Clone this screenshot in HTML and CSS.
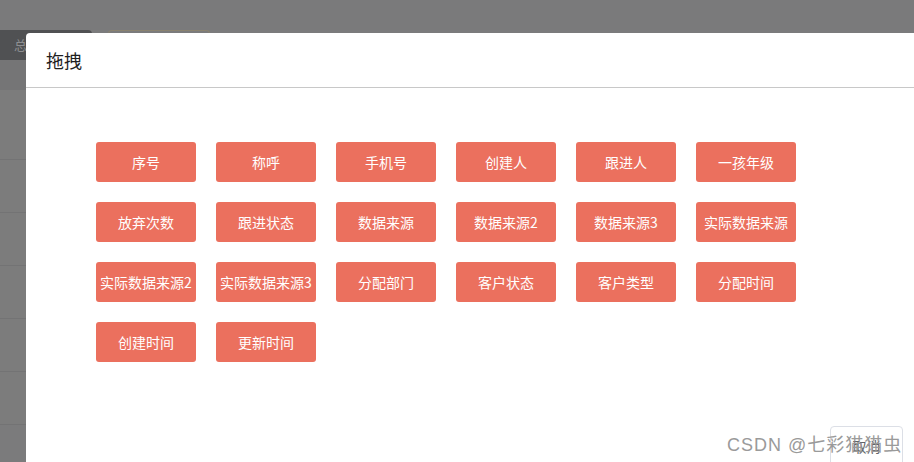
FILE: index.html
```html
<!DOCTYPE html>
<html lang="zh-CN">

<head>
    <meta charset="UTF-8">
    <meta name="viewport" content="width=device-width, initial-scale=1.0">
    <title>拖拽</title>
    <link rel="stylesheet" href="styles.css">
</head>

<body>
    <!-- 背景页面（遮罩下） -->
    <div class="page">
        <div class="top-bar"></div>
        <div class="tab-row">
            <div class="tab-dark">总</div>
            <div class="tab-light"></div>
        </div>
        <div class="band"></div>
        <div class="row row-first"></div>
        <div class="row"></div>
        <div class="row"></div>
        <div class="row"></div>
        <div class="row"></div>
        <div class="row"></div>
    </div>

    <!-- 弹窗 -->
    <div class="dialog">
        <div class="dialog-header">拖拽</div>
        <div class="dialog-body">
            <div class="tag-grid">
                <span class="tag">序号</span>
                <span class="tag">称呼</span>
                <span class="tag">手机号</span>
                <span class="tag">创建人</span>
                <span class="tag">跟进人</span>
                <span class="tag">一孩年级</span>
                <span class="tag">放弃次数</span>
                <span class="tag">跟进状态</span>
                <span class="tag">数据来源</span>
                <span class="tag">数据来源2</span>
                <span class="tag">数据来源3</span>
                <span class="tag">实际数据来源</span>
                <span class="tag">实际数据来源2</span>
                <span class="tag">实际数据来源3</span>
                <span class="tag">分配部门</span>
                <span class="tag">客户状态</span>
                <span class="tag">客户类型</span>
                <span class="tag">分配时间</span>
                <span class="tag">创建时间</span>
                <span class="tag">更新时间</span>
            </div>
        </div>
        <div class="dialog-footer">
            <button class="btn">取消</button>
        </div>
    </div>

    <div class="watermark">CSDN @七彩猫猫虫</div>
</body>

</html>
```

FILE: styles.css
```css
* {
    margin: 0;
    padding: 0;
    box-sizing: border-box;
}

html,
body {
    width: 914px;
    height: 462px;
    overflow: hidden;
}

body {
    font-family: "Noto Sans CJK SC", "Liberation Sans", sans-serif;
    background-color: #7b7b7c;
    position: relative;
}

.top-bar {
    height: 30px;
    background-color: #7a7a7b;
}

.tab-row {
    display: flex;
    height: 30px;
    gap: 16px;
}

.tab-dark {
    width: 92px;
    background-color: #505153;
    border-top-right-radius: 4px;
    color: #8e8f91;
    font-size: 13px;
    line-height: 30px;
    padding-left: 14px;
}

.tab-light {
    width: 102px;
    height: 30px;
    border: 1px solid #8a826f;
    border-bottom: none;
    border-radius: 4px 4px 0 0;
}

.band {
    height: 30px;
    background-color: #757576;
}

.row {
    height: 53px;
    border-bottom: 1px solid #737374;
    background-color: #7c7c7c;
}

.row-first {
    height: 70px;
}

/* 弹窗 */
.dialog {
    position: absolute;
    left: 26px;
    top: 33px;
    width: 888px;
    background-color: #fff;
    border-top-left-radius: 4px;
}

.dialog-header {
    height: 55px;
    padding-left: 20px;
    font-size: 18px;
    line-height: 54px;
    color: #1f1f1f;
    border-bottom: 1px solid #c8c8c8;
}

.dialog-body {
    padding: 54px 70px 44px;
}

.tag-grid {
    display: grid;
    grid-template-columns: repeat(6, 100px);
    gap: 20px;
}

.tag {
    height: 40px;
    line-height: 40px;
    text-align: center;
    background-color: #eb705e;
    color: #fff;
    font-size: 14px;
    border-radius: 3px;
    white-space: nowrap;
}

.dialog-footer {
    display: flex;
    justify-content: flex-end;
    padding: 20px 11px 20px;
}

.btn {
    width: 73px;
    height: 40px;
    font-family: inherit;
    font-size: 14px;
    color: #606266;
    background-color: #fff;
    border: 1px solid #dcdfe6;
    border-radius: 4px;
}

.watermark {
    position: absolute;
    left: 727px;
    top: 430px;
    font-family: "Liberation Sans", "Noto Sans CJK SC", sans-serif;
    font-size: 18px;
    letter-spacing: 1px;
    color: #9a9a9a;
    white-space: nowrap;
}
```
